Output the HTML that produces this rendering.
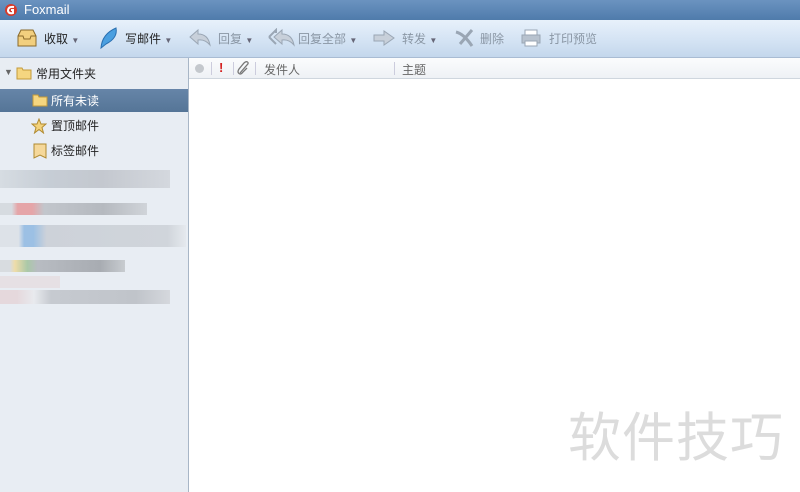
<!DOCTYPE html>
<html><head><meta charset="utf-8"><style>
*{margin:0;padding:0;box-sizing:border-box}
body{width:800px;height:492px;overflow:hidden;font-family:"Liberation Sans","Noto Sans CJK SC",sans-serif;font-size:12px;background:#fff;position:relative}
.abs{position:absolute}
#title{left:0;top:0;width:800px;height:20px;background:linear-gradient(#6b93c0,#4f7bab);color:#fff;font-size:13px}
#tb{left:0;top:20px;width:800px;height:38px;background:linear-gradient(#e8f1fb,#d2e2f3 60%,#c4d7ec);border-bottom:1px solid #a9bcd3}
.tbt{position:absolute;top:10px;font-size:12px;color:#222}
.dis{color:#8a96a4}
.arr{font-size:8px;color:#667}
#side{left:0;top:58px;width:189px;height:434px;background:#e8edf3;border-right:1px solid #a8b6c6}
#hdr{left:189px;top:58px;width:611px;height:21px;background:linear-gradient(#fbfcfd,#eef1f5);border-bottom:1px solid #cfd6de;color:#666}
.blk{position:absolute;height:9px}
</style></head><body>
<div id="title" class="abs">
<svg class="abs" style="left:4px;top:3px" width="15" height="14"><circle cx="7" cy="7" r="6" fill="#d73a2a"/><path d="M10 4 Q4 3 4 8 Q5 11 9 10 L9 7 L7 7" stroke="#fff" stroke-width="2" fill="none"/></svg>
<span class="abs" style="left:24px;top:2px">Foxmail</span></div>
<div id="tb" class="abs">
<svg class="abs" style="left:16px;top:8px" width="22" height="20"><path d="M2 8 L5 2 H17 L20 8 V18 H2Z" fill="#f2cf7e" stroke="#8a6a2a"/><path d="M2 8 H7 L8 11 H14 L15 8 H20" fill="none" stroke="#8a6a2a"/></svg>
<span class="tbt" style="left:44px">收取 <span class="arr">▼</span></span>
<svg class="abs" style="left:98px;top:6px" width="22" height="24"><path d="M3 22 Q4 8 18 2 Q20 12 8 18 Z" fill="#4a9fe0" stroke="#2a6fb0"/></svg>
<span class="tbt" style="left:125px">写邮件 <span class="arr">▼</span></span>
<svg class="abs" style="left:188px;top:8px" width="24" height="20"><path d="M2 9 L10 2 V6 Q20 6 22 17 Q17 11 10 12 V16Z" fill="#c8d0da" stroke="#9aa6b4"/></svg>
<span class="tbt dis" style="left:218px">回复 <span class="arr">▼</span></span>
<svg class="abs" style="left:268px;top:8px" width="28" height="20"><path d="M1 9 L8 2 V5 M8 16 L1 9" fill="none" stroke="#9aa6b4" stroke-width="2"/><path d="M6 9 L14 2 V6 Q24 6 26 17 Q21 11 14 12 V16Z" fill="#c8d0da" stroke="#9aa6b4"/></svg>
<span class="tbt dis" style="left:298px">回复全部 <span class="arr">▼</span></span>
<svg class="abs" style="left:372px;top:9px" width="24" height="18"><path d="M2 6 H12 V2 L22 9 L12 16 V12 H2Z" fill="#c8d0da" stroke="#9aa6b4"/></svg>
<span class="tbt dis" style="left:402px">转发 <span class="arr">▼</span></span>
<svg class="abs" style="left:454px;top:8px" width="22" height="20"><path d="M2 4 Q10 6 18 18 M18 2 L6 16" stroke="#9aa6b4" stroke-width="3" fill="none"/></svg>
<span class="tbt dis" style="left:480px">删除</span>
<svg class="abs" style="left:520px;top:8px" width="22" height="20"><rect x="5" y="2" width="12" height="5" fill="#fff" stroke="#9aa6b4"/><rect x="2" y="7" width="18" height="8" fill="#b8c2ce" stroke="#9aa6b4"/><rect x="5" y="13" width="12" height="5" fill="#fff" stroke="#9aa6b4"/></svg>
<span class="tbt dis" style="left:549px">打印预览</span>
</div>
<div id="side" class="abs">
<span class="abs" style="left:4px;top:9px;font-size:9px;color:#666">▼</span>
<svg class="abs" style="left:16px;top:8px" width="16" height="14"><path d="M1 2 H6 L7 4 H15 V13 H1Z" fill="#f5d680" stroke="#c49a3a"/></svg>
<span class="abs" style="left:36px;top:7px;color:#222">常用文件夹</span>
<div class="abs" style="left:0;top:31px;width:188px;height:23px;background:linear-gradient(#6685a8,#557597)"></div>
<svg class="abs" style="left:32px;top:35px" width="16" height="14"><path d="M1 2 H6 L7 4 H15 V13 H1Z" fill="#f5d680" stroke="#c49a3a"/></svg>
<span class="abs" style="left:51px;top:34px;color:#fff">所有未读</span>
<svg class="abs" style="left:31px;top:60px" width="16" height="16"><path d="M8 1 L10 6 L15 6 L11 9.5 L12.5 15 L8 11.5 L3.5 15 L5 9.5 L1 6 L6 6Z" fill="#f3d27a" stroke="#b08a30"/></svg>
<span class="abs" style="left:51px;top:59px;color:#222">置顶邮件</span>
<svg class="abs" style="left:33px;top:85px" width="14" height="16"><path d="M1 1 H13 V15 L7 12 L1 15Z" fill="#f5d89a" stroke="#b08a30"/></svg>
<span class="abs" style="left:51px;top:84px;color:#222">标签邮件</span>
<div class="blk" style="left:0;top:112px;width:170px;height:18px;background:linear-gradient(90deg,#d6dce2,#c6cdd5 30%,#c4c8cf 60%,#d4d8de)"></div>
<div class="blk" style="left:0;top:145px;width:147px;height:12px;background:linear-gradient(90deg,#d6dbe0 8%,#e5a5a8 12%,#e5a5a8 22%,#c2c6cc 30%,#b5b9bf 70%,#d0d4d9)"></div>
<div class="blk" style="left:0;top:167px;width:186px;height:22px;background:linear-gradient(90deg,#dde2e8 10%,#9cc0e4 13%,#9cc0e4 18%,#cdd2d9 25%,#d0d5db 90%,#e5e9ee)"></div>
<div class="blk" style="left:0;top:202px;width:125px;height:12px;background:linear-gradient(90deg,#d8dce0 8%,#eedca8 12%,#aac8a8 22%,#b8bcc2 30%,#a8acb2 80%,#c8ccd0)"></div>
<div class="blk" style="left:0;top:218px;width:60px;height:12px;background:#e6e0e4"></div>
<div class="blk" style="left:0;top:232px;width:170px;height:14px;background:linear-gradient(90deg,#e5d8dc 10%,#e8eaee 20%,#c6cad0 30%,#c0c4ca 80%,#d5d8dd)"></div>
</div>
<div id="hdr" class="abs">
<span class="abs" style="left:6px;top:6px;width:9px;height:9px;border-radius:50%;background:#c4c8cd"></span>
<div class="abs" style="left:22px;top:4px;width:1px;height:13px;background:#ccd"></div>
<span class="abs" style="left:30px;top:2px;color:#d42020;font-weight:bold;font-size:13px">!</span>
<div class="abs" style="left:44px;top:4px;width:1px;height:13px;background:#ccd"></div>
<svg class="abs" style="left:48px;top:3px" width="14" height="15"><path d="M3 12 L10 4 Q12 2 10.5 1 Q9 0 7 2 L2 8 Q0 11 2 12.5 Q4 14 6 11 L10 7" fill="none" stroke="#777" stroke-width="1.3"/></svg>
<div class="abs" style="left:66px;top:4px;width:1px;height:13px;background:#ccd"></div>
<span class="abs" style="left:75px;top:3px">发件人</span>
<div class="abs" style="left:205px;top:4px;width:1px;height:13px;background:#ccd"></div>
<span class="abs" style="left:213px;top:3px">主题</span>
</div>
<div class="abs" style="left:568px;top:403px;font-size:53px;color:#dcdcdc;letter-spacing:1px;font-family:'Noto Sans CJK SC',sans-serif;line-height:1.2">软件技巧</div>
</body></html>
